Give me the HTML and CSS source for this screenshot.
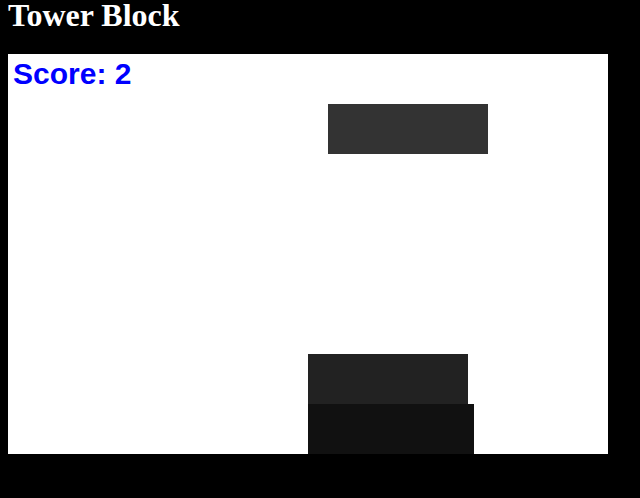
FILE: index.html
```html
<!DOCTYPE html>
<html>
<head>
<meta charset="utf-8">
<title>Tower Block</title>
<link rel="stylesheet" href="styles.css">
</head>
<body>
<h1 class="title">Tower Block</h1>
<div class="board">
  <div class="score">Score: 2</div>
  <div class="block block-moving" style="left:320px; top:50px; width:160px;"></div>
  <div class="block block-level-1" style="left:300px; top:300px; width:160px;"></div>
  <div class="block block-base" style="left:300px; top:350px; width:166px;"></div>
</div>
</body>
</html>
```

FILE: styles.css
```css
html, body {
  background: #000;
}

body {
  margin: 0;
  padding: 0 8px;
  color: #fff;
  font-family: "Liberation Serif", "Times New Roman", serif;
}

.title {
  margin: 0 0 24px;
  font-size: 32px;
  font-weight: bold;
  line-height: 30px;
}

.board {
  position: relative;
  width: 600px;
  height: 400px;
  background: #fff;
  overflow: hidden;
}

.score {
  position: absolute;
  left: 5px;
  top: 5px;
  font-family: "Liberation Sans", Arial, sans-serif;
  font-weight: bold;
  font-size: 30px;
  line-height: 30px;
  color: #0000ff;
}

.block {
  position: absolute;
  height: 50px;
}

.block-moving { background: #333; }
.block-level-1 { background: #222; }
.block-base { background: #111; }
```
